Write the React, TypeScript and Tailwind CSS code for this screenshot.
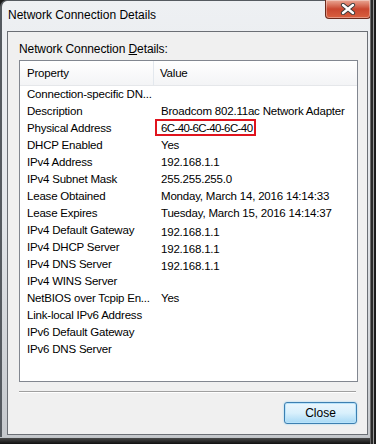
import React from 'react';

type Row = { name: string; value?: string; boxed?: boolean; low?: boolean };

const ROWS: Row[] = [
    { name: 'Connection-specific DN...' },
    { name: 'Description', value: 'Broadcom 802.11ac Network Adapter' },
    { name: 'Physical Address', value: '6C-40-6C-40-6C-40', boxed: true },
    { name: 'DHCP Enabled', value: 'Yes' },
    { name: 'IPv4 Address', value: '192.168.1.1' },
    { name: 'IPv4 Subnet Mask', value: '255.255.255.0' },
    { name: 'Lease Obtained', value: 'Monday, March 14, 2016 14:14:33' },
    { name: 'Lease Expires', value: 'Tuesday, March 15, 2016 14:14:37' },
    { name: 'IPv4 Default Gateway', value: '192.168.1.1', low: true },
    { name: 'IPv4 DHCP Server', value: '192.168.1.1', low: true },
    { name: 'IPv4 DNS Server', value: '192.168.1.1', low: true },
    { name: 'IPv4 WINS Server' },
    { name: 'NetBIOS over Tcpip En...', value: 'Yes' },
    { name: 'Link-local IPv6 Address' },
    { name: 'IPv6 Default Gateway' },
    { name: 'IPv6 DNS Server' },
];

function CaptionClose() {
    return (
        <div className="w-[46px] h-[19px] rounded-b-[4px] border border-t-0 border-[#6b2a1c] bg-gradient-to-b from-[#e9a795] via-[#c9462f] to-[#d9603f] flex items-center justify-center shadow-[inset_0_0_0_1px_rgba(255,255,255,0.35)]">
            <svg width="16" height="12" viewBox="0 0 16 12">
                <path d="M3 2 L13 10 M13 2 L3 10" stroke="#3a3a3a" strokeWidth="4.2" strokeLinecap="round" />
                <path d="M3 2 L13 10 M13 2 L3 10" stroke="#ffffff" strokeWidth="2.4" strokeLinecap="round" />
            </svg>
        </div>
    );
}

export default function App() {
    return (
        <div className="w-[376px] h-[444px] overflow-hidden bg-[#1b1b1b] flex font-['Liberation_Sans',Arial,sans-serif] text-[11.5px] tracking-[-0.2px] text-black">
            <div className="flex flex-col">
                <div className="w-[370px] h-[437px] rounded-tl-[7px] border-l-2 border-t border-[#555a60] bg-gradient-to-b from-[#eef0f3] via-[#e2e5e9] to-[#c5c8cc] flex flex-col pl-[5px]">
                    {/* title bar */}
                    <div className="h-[30px] flex justify-between">
                        <span className="pl-[1px] pt-[7px] leading-[15px] text-[12px] tracking-normal">Network Connection Details</span>
                        <div className="-mt-px -mr-px">
                            <CaptionClose />
                        </div>
                    </div>

                    {/* client area */}
                    <div className="w-[361px] h-[404px] border border-[#6b6f75] bg-[#f0f0f0] flex flex-col">
                        <div className="mt-[10px] ml-[11px] leading-[15px] text-[12px] tracking-[-0.1px]">
                            Network Connection <span className="underline">D</span>etails:
                        </div>

                        <div className="mt-[3px] ml-[11px] w-[339px] h-[322px] border border-[#828790] bg-white flex flex-col">
                            <div className="h-[25px] flex bg-gradient-to-b from-white to-[#f3f4f6] border-b border-[#e5e7ea]">
                                <div className="w-[134px] pl-[7px] pt-px flex items-center border-r border-[#e3e8ee]">Property</div>
                                <div className="flex-1 pl-[6px] pt-px flex items-center">Value</div>
                            </div>
                            {ROWS.map((r) => (
                                <div key={r.name} className="h-[17px] flex leading-[17px]">
                                    <div className="w-[134px] pl-[7px] whitespace-nowrap">{r.name}</div>
                                    <div className={`flex-1 pl-[7px] whitespace-nowrap ${r.low ? 'pt-[2px]' : ''}`}>
                                        {r.boxed ? (
                                            <span className="-ml-[6px] -mt-[1px] inline-block align-top h-[17px] leading-[14px] pl-[4px] pr-[2px] border-2 border-[#e0141e] tracking-[-0.6px]">
                                                {r.value}
                                            </span>
                                        ) : (
                                            r.value
                                        )}
                                    </div>
                                </div>
                            ))}
                        </div>

                        <div className="mt-[9px] ml-[11px] w-[337px] h-[2px] border-t border-b border-t-[#a0a0a0] border-b-white" />

                        <div className="mt-[9px] mr-[10px] self-end">
                            <button className="w-[73px] h-[22px] rounded-[3px] border border-[#3c7fb1] bg-gradient-to-b from-[#eaf6fd] via-[#d9f0fc] to-[#a7d9f5] shadow-[inset_0_0_0_1px_#b8e3fb,0_0_2px_#8fd0f3] leading-[18px] text-[12px] tracking-normal">
                                Close
                            </button>
                        </div>
                    </div>
                </div>
                <div className="h-px bg-[#bfc3c7]" />
                <div className="flex-1 bg-gradient-to-b from-[#4a4a4a] to-[#111111]" />
            </div>
            <div className="flex-1 flex">
                <div className="w-px bg-[#6d6d6d]" />
                <div className="w-[2px] bg-[#2a2a2a]" />
                <div className="w-px bg-[#9a9a9a]" />
                <div className="flex-1 bg-[#1c1c1c]" />
            </div>
        </div>
    );
}
